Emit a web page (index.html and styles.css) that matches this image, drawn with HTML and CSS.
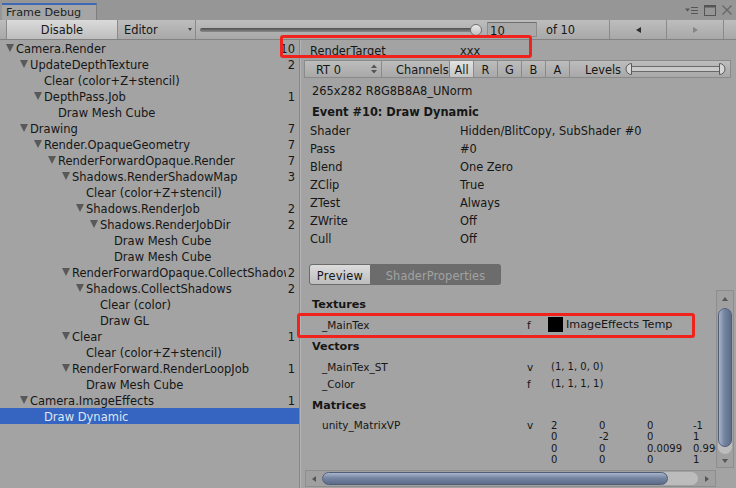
FILE: index.html
```html
<!DOCTYPE html>
<html lang="en">
<head>
  <meta charset="UTF-8">
  <title>Frame Debug</title>
  <link rel="stylesheet" href="styles.css">
</head>
<body>
  <div class="window">
    <div class="tabstrip">
      <div class="tab">Frame Debug</div>
      <svg class="win-icons" width="48" height="12" viewBox="0 0 48 12">
        <path d="M0 4.5h5l-2.5 3z" fill="#555"/>
        <path d="M6 3.5h7M6 6.5h7M6 9.5h7" stroke="#555" stroke-width="1.2"/>
        <rect x="19.5" y="1.5" width="11" height="10" fill="none" stroke="#555"/>
        <path d="M19.5 2.5h11" stroke="#555" stroke-width="2"/>
        <path d="M37.5 1.5l9 9M46.5 1.5l-9 9" stroke="#666" stroke-width="1.3"/>
      </svg>
    </div>

    <div class="toolbar">
      <div class="tb-lead"></div>
      <div class="tb-btn tb-on tb-disable">Disable</div>
      <div class="tb-pop">Editor<i class="pop-arrow"></i></div>
      <div class="tb-slider"><div class="track"></div><div class="thumb"></div></div>
      <div class="tb-field">10</div>
      <div class="tb-label">of 10</div>
      <div class="tb-btn tb-step"><i class="tri-left"></i></div>
      <div class="tb-btn tb-step tb-last"><i class="tri-right"></i></div>
    </div>

    <div class="main">
      <div class="tree">
        <div class="row l0"><i class="tw"></i><span class="name">Camera.Render</span><span class="count">10</span></div>
        <div class="row l1"><i class="tw"></i><span class="name">UpdateDepthTexture</span><span class="count">2</span></div>
        <div class="row l2 leaf"><i class="tw"></i><span class="name">Clear (color+Z+stencil)</span></div>
        <div class="row l2"><i class="tw"></i><span class="name">DepthPass.Job</span><span class="count">1</span></div>
        <div class="row l3 leaf"><i class="tw"></i><span class="name">Draw Mesh Cube</span></div>
        <div class="row l1"><i class="tw"></i><span class="name">Drawing</span><span class="count">7</span></div>
        <div class="row l2"><i class="tw"></i><span class="name">Render.OpaqueGeometry</span><span class="count">7</span></div>
        <div class="row l3"><i class="tw"></i><span class="name">RenderForwardOpaque.Render</span><span class="count">7</span></div>
        <div class="row l4"><i class="tw"></i><span class="name">Shadows.RenderShadowMap</span><span class="count">3</span></div>
        <div class="row l5 leaf"><i class="tw"></i><span class="name">Clear (color+Z+stencil)</span></div>
        <div class="row l5"><i class="tw"></i><span class="name">Shadows.RenderJob</span><span class="count">2</span></div>
        <div class="row l6"><i class="tw"></i><span class="name">Shadows.RenderJobDir</span><span class="count">2</span></div>
        <div class="row l7 leaf"><i class="tw"></i><span class="name">Draw Mesh Cube</span></div>
        <div class="row l7 leaf"><i class="tw"></i><span class="name">Draw Mesh Cube</span></div>
        <div class="row l4"><i class="tw"></i><span class="name">RenderForwardOpaque.CollectShadows</span><span class="count">2</span></div>
        <div class="row l5"><i class="tw"></i><span class="name">Shadows.CollectShadows</span><span class="count">2</span></div>
        <div class="row l6 leaf"><i class="tw"></i><span class="name">Clear (color)</span></div>
        <div class="row l6 leaf"><i class="tw"></i><span class="name">Draw GL</span></div>
        <div class="row l4"><i class="tw"></i><span class="name">Clear</span><span class="count">1</span></div>
        <div class="row l5 leaf"><i class="tw"></i><span class="name">Clear (color+Z+stencil)</span></div>
        <div class="row l4"><i class="tw"></i><span class="name">RenderForward.RenderLoopJob</span><span class="count">1</span></div>
        <div class="row l5 leaf"><i class="tw"></i><span class="name">Draw Mesh Cube</span></div>
        <div class="row l1"><i class="tw"></i><span class="name">Camera.ImageEffects</span><span class="count">1</span></div>
        <div class="row l2 leaf sel"><i class="tw"></i><span class="name">Draw Dynamic</span></div>
      </div>

      <div class="detail">
        <div class="kv rt"><span class="k">RenderTarget</span><span>xxx</span></div>

        <div class="chan-bar">
          <div class="cb-pop">RT 0
            <svg class="updown" width="6" height="10" viewBox="0 0 6 10">
              <path d="M0 4h6L3 0.5z M0 6h6L3 9.5z" fill="#555"/>
            </svg>
          </div>
          <div class="cb-label cb-channels">Channels</div>
          <div class="cb-btn cb-on">All</div>
          <div class="cb-btn">R</div>
          <div class="cb-btn">G</div>
          <div class="cb-btn">B</div>
          <div class="cb-btn">A</div>
          <div class="cb-label cb-levels">Levels</div>
          <svg class="levels" width="103" height="12" viewBox="0 0 103 12">
            <rect x="4.5" y="3.5" width="94" height="5" rx="2" fill="#c9c9c9" stroke="#6a6a6a"/>
            <path d="M7.5 0.5a5.5 5.5 0 0 0 0 11z" fill="#d6d6d6" stroke="#5a5a5a"/>
            <path d="M95.5 0.5a5.5 5.5 0 0 1 0 11z" fill="#d6d6d6" stroke="#5a5a5a"/>
          </svg>
        </div>

        <div class="info">265x282 R8G8B8A8_UNorm</div>
        <div class="event">Event #10: Draw Dynamic</div>

        <div class="kv-list">
          <div class="kv"><span class="k">Shader</span><span>Hidden/BlitCopy, SubShader #0</span></div>
          <div class="kv"><span class="k">Pass</span><span>#0</span></div>
          <div class="kv"><span class="k">Blend</span><span>One Zero</span></div>
          <div class="kv"><span class="k">ZClip</span><span>True</span></div>
          <div class="kv"><span class="k">ZTest</span><span>Always</span></div>
          <div class="kv"><span class="k">ZWrite</span><span>Off</span></div>
          <div class="kv"><span class="k">Cull</span><span>Off</span></div>
        </div>

        <div class="seg">
          <div class="seg-btn seg-light">Preview</div>
          <div class="seg-btn seg-dark">ShaderProperties</div>
        </div>

        <div class="scrollview">
          <div class="sv-content">
            <div class="sec-title">Textures</div>
            <div class="prop">
              <span class="pn">_MainTex</span><span class="pt">f</span>
              <span class="pv tex"><i class="swatch"></i>ImageEffects Temp</span>
            </div>

            <div class="sec-title">Vectors</div>
            <div class="prop"><span class="pn">_MainTex_ST</span><span class="pt">v</span><span class="pv">(1, 1, 0, 0)</span></div>
            <div class="prop"><span class="pn">_Color</span><span class="pt">f</span><span class="pv">(1, 1, 1, 1)</span></div>

            <div class="sec-title">Matrices</div>
            <div class="prop mat">
              <span class="pn">unity_MatrixVP</span><span class="pt">v</span>
              <div class="pv matrix">
                <span>2</span><span>0</span><span>0</span><span>-1</span>
                <span>0</span><span>-2</span><span>0</span><span>1</span>
                <span>0</span><span>0</span><span>0.0099</span><span>0.9901</span>
                <span>0</span><span>0</span><span>0</span><span>1</span>
              </div>
            </div>
          </div>

          <div class="vscroll">
            <i class="arr-up"></i>
            <div class="trough"><div class="vthumb"></div></div>
            <i class="arr-down"></i>
          </div>

          <div class="hscroll">
            <i class="arr-left"></i>
            <div class="trough"><div class="hthumb"></div></div>
            <i class="arr-right"></i>
          </div>
        </div>
      </div>
    </div>

    <!-- red annotation boxes -->
    <div class="mark mark-rt"></div>
    <div class="mark mark-tex"></div>
  </div>
</body>
</html>
```

FILE: styles.css
```css
* {
  box-sizing: border-box;
}

body {
  margin: 0;
  width: 736px;
  height: 488px;
  overflow: hidden;
  background: #a3a3a3;
  font-family: "DejaVu Sans", sans-serif;
  font-size: 11.4px;
  color: #161616;
}

.window {
  position: relative;
  width: 736px;
  height: 488px;
  display: flex;
  flex-direction: column;
}

/* tab strip */
.tabstrip {
  height: 20px;
  flex: none;
  display: flex;
  align-items: flex-end;
  padding-left: 2px;
  background: #969696;
}

.tab {
  width: 95px;
  height: 17px;
  padding-left: 4px;
  line-height: 15px;
  background: #a5a5a5;
  border-top: 2px solid #3d68b4;
  border-right: 1px solid #7e7e7e;
  color: #1e1e1e;
  font-size: 11.2px;
}

.win-icons {
  margin-left: auto;
  margin-right: 3px;
  align-self: center;
}

/* main toolbar */
.toolbar {
  height: 20px;
  flex: none;
  display: flex;
  background: linear-gradient(#bdbdbd, #a8a8a8);
  border-bottom: 1px solid #828282;
}

.tb-lead {
  width: 6px;
}

.tb-btn {
  display: flex;
  align-items: center;
  justify-content: center;
  border-left: 1px solid #8a8a8a;
}

.tb-on {
  background: linear-gradient(#dadada, #bebebe);
}

.tb-disable {
  width: 111px;
}

.tb-pop {
  width: 79px;
  display: flex;
  align-items: center;
  padding-left: 6px;
  border-left: 1px solid #8a8a8a;
  border-right: 1px solid #8a8a8a;
}

.pop-arrow {
  margin-left: auto;
  margin-right: 3px;
  border-left: 2.5px solid transparent;
  border-right: 2.5px solid transparent;
  border-top: 3px solid #444;
}

.tb-slider {
  width: 291px;
  display: flex;
  align-items: center;
  padding: 0 5px 0 4px;
}

.tb-slider .track {
  flex: 1;
  height: 4px;
  border-radius: 2px;
  background: linear-gradient(#4f4f4f, #8a8a8a);
}

.tb-slider .thumb {
  flex: none;
  width: 12px;
  height: 12px;
  margin-left: -10px;
  border-radius: 50%;
  border: 1px solid #707070;
  background: linear-gradient(#ececec, #bdbdbd);
}

.tb-field {
  width: 50px;
  margin: 2px 0;
  padding: 1px 0 0 2px;
  line-height: 14px;
  background: #a9a9a9;
  border: 1px solid #8c8c8c;
  border-top-color: #6e6e6e;
  font-size: 11.6px;
}

.tb-label {
  width: 72px;
  display: flex;
  align-items: center;
  padding-left: 9px;
}

.tb-step {
  width: 57px;
}

.tb-last {
  width: 58px;
  border-right: 1px solid #8a8a8a;
}

.tri-left {
  border-top: 3.5px solid transparent;
  border-bottom: 3.5px solid transparent;
  border-right: 5px solid #2e2e2e;
}

.tri-right {
  border-top: 3.5px solid transparent;
  border-bottom: 3.5px solid transparent;
  border-left: 5px solid #858585;
}

/* body */
.main {
  flex: 1;
  min-height: 0;
  display: flex;
}

.tree {
  width: 300px;
  flex: none;
  overflow: hidden;
  border-right: 1px solid #868686;
  font-size: 11.5px;
}

.row {
  height: 16px;
  line-height: 14px;
  display: flex;
  align-items: center;
  padding: 2px 4px 0 0;
  white-space: nowrap;
}

.row .tw {
  flex: none;
  width: 0;
  height: 0;
  margin: -2px 2px 0 0;
  border-left: 4.5px solid transparent;
  border-right: 4.5px solid transparent;
  border-top: 8px solid #595959;
}

.leaf .tw {
  border-top-color: transparent;
}

.name {
  flex: 1;
  min-width: 0;
  overflow: hidden;
}

.count {
  flex: none;
  padding-left: 2px;
}

.l0 { padding-left: 6px; }
.l1 { padding-left: 20px; }
.l2 { padding-left: 34px; }
.l3 { padding-left: 48px; }
.l4 { padding-left: 62px; }
.l5 { padding-left: 76px; }
.l6 { padding-left: 90px; }
.l7 { padding-left: 104px; }

.sel {
  background: #3565c1;
  color: #dfe6f3;
}

.detail {
  flex: 1;
  min-width: 0;
  display: flex;
  flex-direction: column;
  border-left: 1px solid #b4b4b4;
}

.kv {
  display: flex;
  height: 18px;
  line-height: 18px;
  padding: 1px 0 0 9px;
  white-space: nowrap;
}

.kv .k {
  width: 150px;
  flex: none;
}

.kv.rt {
  height: 16px;
  line-height: 16px;
  margin-top: 1px;
  padding-top: 2px;
}

/* channels toolbar */
.chan-bar {
  height: 18px;
  margin: 3px 5px 0 3px;
  display: flex;
  align-items: stretch;
  background: linear-gradient(#bdbdbd, #a8a8a8);
  border: 1px solid #8a8a8a;
}

.cb-pop {
  width: 77px;
  display: flex;
  align-items: center;
  padding: 1px 0 0 11px;
  border-right: 1px solid #8a8a8a;
}

.updown {
  margin: -1px 4px 0 auto;
}

.cb-label {
  display: flex;
  align-items: center;
  padding-top: 1px;
}

.cb-channels {
  width: 68px;
  padding-left: 14px;
  border-right: 1px solid #8a8a8a;
}

.cb-btn {
  width: 24px;
  display: flex;
  align-items: center;
  justify-content: center;
  padding-top: 1px;
  border-right: 1px solid #8a8a8a;
}

.cb-on {
  background: linear-gradient(#e2e2e2, #c6c6c6);
}

.cb-levels {
  padding-left: 15px;
}

.levels {
  align-self: center;
  margin-left: 3px;
}

.info {
  height: 18px;
  line-height: 18px;
  margin-top: 2px;
  padding: 2px 0 0 11px;
}

.event {
  height: 18px;
  line-height: 18px;
  margin-top: 3px;
  padding: 2px 0 0 11px;
  font-weight: bold;
}

.kv-list {
  margin-top: 2px;
}

/* preview / properties toggle */
.seg {
  display: flex;
  height: 21px;
  margin: 17px 0 0 8px;
}

.seg-btn {
  display: flex;
  align-items: center;
  justify-content: center;
  padding-top: 2px;
  border: 1px solid #6b6b6b;
  letter-spacing: 0.3px;
}

.seg-light {
  width: 62px;
  background: linear-gradient(#dcdcdc, #bdbdbd);
  border-radius: 3px 0 0 3px;
}

.seg-dark {
  width: 130px;
  background: #6c6c6c;
  color: #a2a2a2;
  border-left: none;
  border-radius: 0 3px 3px 0;
  letter-spacing: 0.1px;
}

/* shader properties scroll view */
.scrollview {
  flex: 1;
  min-height: 0;
  margin: 5px 2px 0 2px;
  display: grid;
  grid-template-columns: 1fr 18px;
  grid-template-rows: 1fr 20px;
}

.sv-content {
  overflow: hidden;
  white-space: nowrap;
}

.sec-title {
  height: 18px;
  line-height: 18px;
  margin: 4px 0 3px;
  padding: 2px 0 0 9px;
  font-weight: bold;
  font-size: 11.2px;
}

.prop {
  display: flex;
  align-items: center;
  height: 17px;
  line-height: 14px;
  padding: 3px 0 0 19px;
  font-size: 10.5px;
}

.pn {
  width: 205px;
  flex: none;
}

.pt {
  width: 21px;
  flex: none;
}

.pv {
  padding-left: 3px;
  font-size: 10px;
}

.pv.tex {
  display: flex;
  align-items: center;
  gap: 3px;
  padding-left: 0;
  font-size: 11.2px;
}

.swatch {
  width: 15px;
  height: 15px;
  margin-top: -2px;
  background: #000;
}

.prop.mat {
  height: auto;
  align-items: flex-start;
  padding-top: 4px;
  line-height: 11.3px;
}

.matrix {
  display: grid;
  grid-template-columns: 48px 48px 46px 40px;
  line-height: 11.3px;
}

.vscroll {
  display: flex;
  flex-direction: column;
  align-items: center;
  border: 1px solid #8e8e8e;
  background: #a0a0a0;
}

.arr-up,
.arr-down {
  flex: none;
  border-left: 3.5px solid transparent;
  border-right: 3.5px solid transparent;
}

.arr-up {
  margin: 6px 0 7px;
  border-bottom: 4px solid #555;
}

.arr-down {
  margin: 5px 0 4px;
  border-top: 4px solid #555;
}

.vscroll .trough {
  flex: 1;
  width: 14px;
  border-radius: 7px;
  background: #bcbcbc;
  display: flex;
  flex-direction: column;
}

.vthumb {
  height: 139px;
  border-radius: 7px;
  border: 1px solid #4f5d76;
  background: linear-gradient(to right, #a6b3c9, #7585a1 45%, #5d6c88);
}

.hscroll {
  grid-column: 1;
  margin: 2px 0 1px 2px;
  display: flex;
  align-items: center;
  border: 1px solid #8e8e8e;
  background: #a0a0a0;
}

.arr-left,
.arr-right {
  flex: none;
  border-top: 3.5px solid transparent;
  border-bottom: 3.5px solid transparent;
}

.arr-left {
  margin: 0 6px;
  border-right: 4px solid #555;
}

.arr-right {
  margin: 0 6px 0 7px;
  border-left: 4px solid #555;
}

.hscroll .trough {
  flex: 1;
  height: 13px;
  border-radius: 7px;
  background: #bcbcbc;
  display: flex;
}

.hthumb {
  width: 346px;
  border-radius: 7px;
  border: 1px solid #4f5d76;
  background: linear-gradient(#a8b5cb, #7686a2 45%, #5d6c88);
}

/* red annotation boxes drawn over the screenshot */
.mark {
  position: absolute;
  border: 3px solid #f0231c;
  border-radius: 3px;
}

.mark-rt {
  left: 280px;
  top: 35px;
  width: 252px;
  height: 23px;
}

.mark-tex {
  left: 297px;
  top: 313px;
  width: 398px;
  height: 25px;
}
```
